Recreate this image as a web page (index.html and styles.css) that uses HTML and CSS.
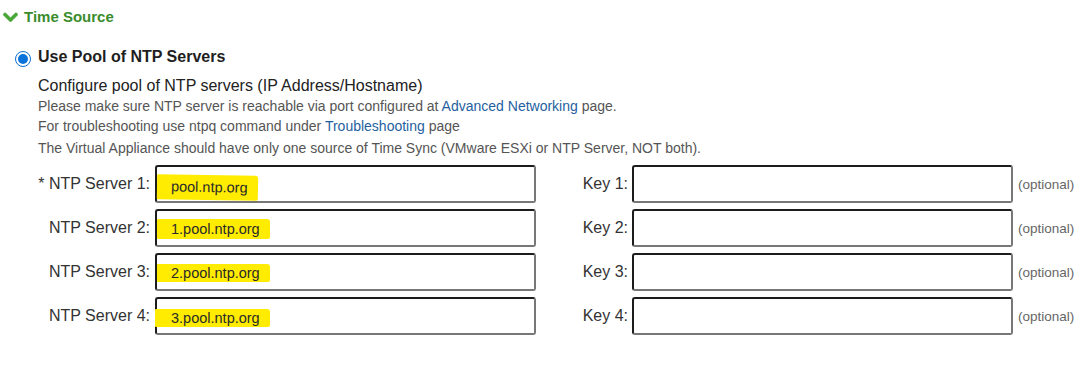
FILE: index.html
```html
<!DOCTYPE html>
<html>
<head>
<meta charset="utf-8">
<link rel="stylesheet" href="styles.css">
</head>
<body>
<div class="section-head">
  <svg class="chev" width="15" height="11" viewBox="0 0 15 11"><polyline points="2,2.5 7.5,8 13,2.5" fill="none" stroke="#4aa83a" stroke-width="3.6" stroke-linecap="round" stroke-linejoin="round"/></svg>
  <span class="section-title">Time Source</span>
</div>
<div class="option">
  <span class="radio"><span class="radio-dot"></span></span>
  <span class="option-label">Use Pool of NTP Servers</span>
</div>
<div class="desc">
  <div class="desc-title">Configure pool of NTP servers (IP Address/Hostname)</div>
  <div class="note">Please make sure NTP server is reachable via port configured at <a class="link">Advanced Networking</a> page.</div>
  <div class="note">For troubleshooting use ntpq command under <a class="link">Troubleshooting</a> page</div>
  <div class="note note-last">The Virtual Appliance should have only one source of Time Sync (VMware ESXi or NTP Server, NOT both).</div>
</div>
<div class="grid">
  <div class="label">* NTP Server 1:</div>
  <div class="field"><span class="mark m1">pool.ntp.org</span></div>
  <div class="label key">Key 1:</div>
  <div class="field"></div>
  <div class="opt">(optional)</div>

  <div class="label">NTP Server 2:</div>
  <div class="field"><span class="mark m2">1.pool.ntp.org</span></div>
  <div class="label key">Key 2:</div>
  <div class="field"></div>
  <div class="opt">(optional)</div>

  <div class="label">NTP Server 3:</div>
  <div class="field"><span class="mark m3">2.pool.ntp.org</span></div>
  <div class="label key">Key 3:</div>
  <div class="field"></div>
  <div class="opt">(optional)</div>

  <div class="label">NTP Server 4:</div>
  <div class="field"><span class="mark m4">3.pool.ntp.org</span></div>
  <div class="label key">Key 4:</div>
  <div class="field"></div>
  <div class="opt">(optional)</div>
</div>
</body>
</html>
```
FILE: styles.css
```css
html, body {
  margin: 0;
  padding: 0;
  background: #ffffff;
  font-family: "Liberation Sans", Arial, sans-serif;
  color: #222222;
}

.section-head {
  display: flex;
  align-items: center;
  gap: 6px;
  padding: 8px 0 0 3px;
  height: 18px;
}

.chev {
  display: block;
}

.section-title {
  font-size: 15px;
  line-height: 18px;
  font-weight: bold;
  color: #3a8c2c;
}

.option {
  display: flex;
  align-items: flex-start;
  gap: 7px;
  margin-top: 21px;
  padding-left: 15px;
}

.radio {
  width: 16px;
  height: 16px;
  box-sizing: border-box;
  border: 1.5px solid #0b6fd1;
  border-radius: 50%;
  margin-top: 4px;
  display: flex;
  align-items: center;
  justify-content: center;
  background: #ffffff;
}

.radio-dot {
  width: 10px;
  height: 10px;
  border-radius: 50%;
  background: #0b74da;
}

.option-label {
  font-size: 16px;
  line-height: 20px;
  font-weight: bold;
  color: #1e1e1e;
}

.desc {
  padding-left: 38px;
  margin-top: 9px;
}

.desc-title {
  font-size: 16px;
  line-height: 20px;
  color: #222222;
}

.note {
  font-size: 14px;
  line-height: 20px;
  color: #555555;
}

.note-last {
  margin-top: 2px;
}

.link {
  color: #1f5f9f;
  text-decoration: none;
}

.grid {
  display: grid;
  grid-template-columns: 155px 381px 96px 381px auto;
  grid-auto-rows: 38px;
  row-gap: 6px;
  margin-top: 7px;
  align-items: center;
}

.label {
  text-align: right;
  padding-right: 5px;
  font-size: 16px;
  color: #333333;
  white-space: nowrap;
}

.label.key {
  padding-right: 4px;
}

.field {
  height: 38px;
  box-sizing: border-box;
  border: 2px solid;
  border-color: #1c1c1c #777777 #777777 #1c1c1c;
  border-radius: 3px;
  background: #ffffff;
  display: flex;
  align-items: center;
}

.mark {
  display: inline-block;
  background: #ffec00;
  color: #2a2a2a;
  font-size: 14.5px;
  line-height: 22px;
  padding: 0 10px 0 14px;
  border-radius: 1px 3px 2px 1px;
}

.m1 {
  margin-top: 6px;
  line-height: 25px;
  transform: rotate(1deg);
}

.m2 {
  margin-top: 2px;
  line-height: 20px;
}

.m3 {
  margin-top: 2px;
  line-height: 18px;
}

.m4 {
  margin-top: 4px;
  line-height: 18px;
  padding-left: 16px;
  margin-left: -2px;
}

.opt {
  font-size: 13.5px;
  color: #666666;
  padding-left: 5px;
  white-space: nowrap;
}
```
